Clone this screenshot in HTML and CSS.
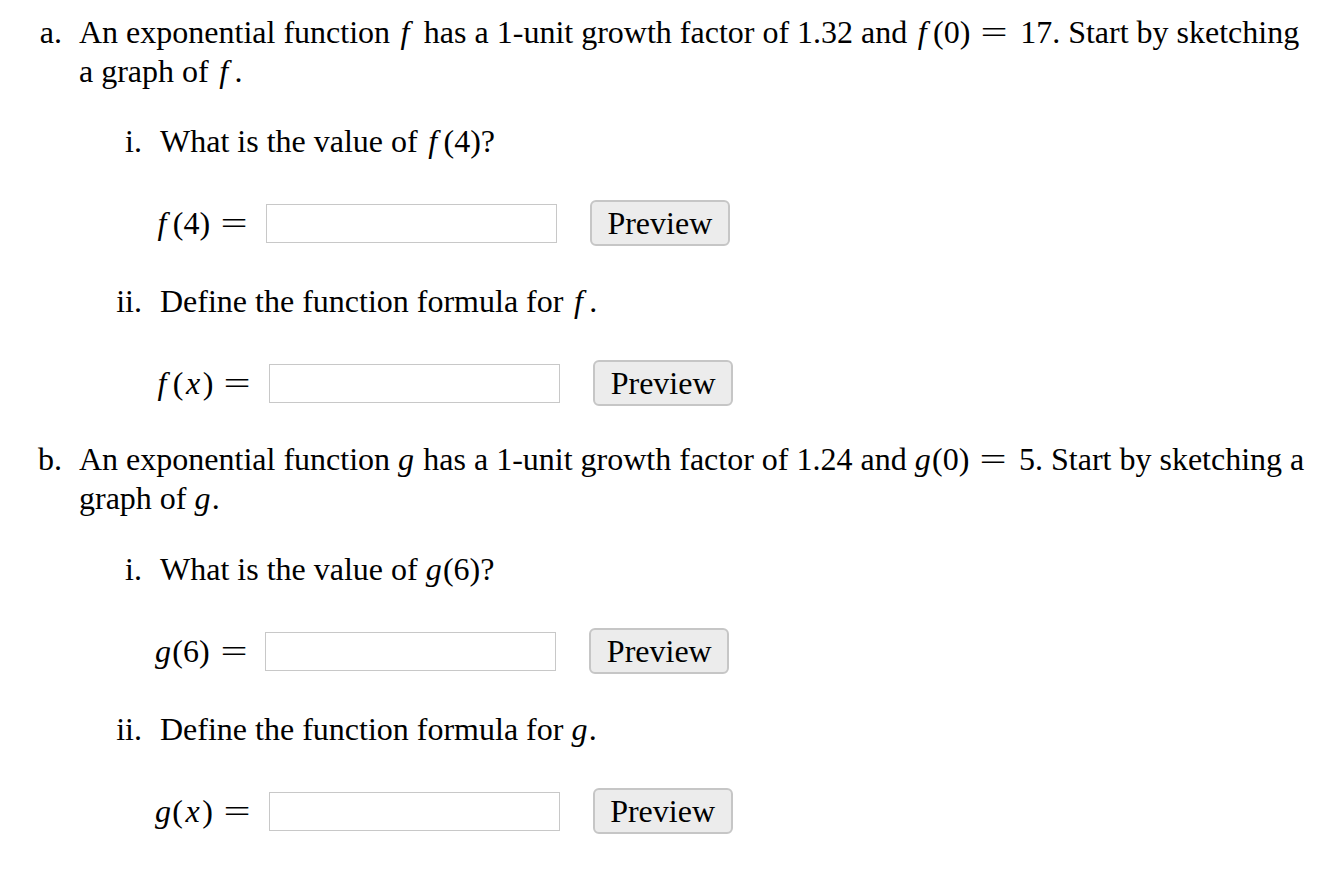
FILE: index.html
```html
<!DOCTYPE html>
<html>
<head>
<meta charset="utf-8">
<link rel="stylesheet" href="styles.css">
</head>
<body>
<div class="problem">
  <div class="part">
    <span class="mark">a.</span>
    <div class="body">
      <p class="text">An exponential function <span class="math"><i class="mv fv">f</i></span> has a 1-unit growth factor of 1.32 and <span class="math"><i class="mv fv">f</i>(0)<span class="eq">=</span>17</span>. Start by sketching a graph of <span class="math"><i class="mv fv">f</i></span>.</p>
      <div class="sub">
        <span class="mark">i.</span>
        <p class="text">What is the value of <span class="math"><i class="mv fv">f</i>(4)</span>?</p>
        <div class="row">
          <span class="math label"><i class="mv fv">f</i>(4)<span class="eq">=</span></span>
          <input class="answer" type="text">
          <button class="preview" type="button">Preview</button>
        </div>
      </div>
      <div class="sub">
        <span class="mark">ii.</span>
        <p class="text">Define the function formula for <span class="math"><i class="mv fv">f</i></span>.</p>
        <div class="row">
          <span class="math label"><i class="mv fv">f</i>(<i class="mv xv">x</i>)<span class="eq">=</span></span>
          <input class="answer" type="text">
          <button class="preview" type="button">Preview</button>
        </div>
      </div>
    </div>
  </div>
  <div class="part">
    <span class="mark">b.</span>
    <div class="body">
      <p class="text">An exponential function <span class="math"><i class="mv gv">g</i></span> has a 1-unit growth factor of 1.24 and <span class="math"><i class="mv gv">g</i>(0)<span class="eq">=</span>5</span>. Start by sketching a graph of <span class="math"><i class="mv gv">g</i></span>.</p>
      <div class="sub">
        <span class="mark">i.</span>
        <p class="text">What is the value of <span class="math"><i class="mv gv">g</i>(6)</span>?</p>
        <div class="row">
          <span class="math label"><i class="mv gv">g</i>(6)<span class="eq">=</span></span>
          <input class="answer" type="text">
          <button class="preview" type="button">Preview</button>
        </div>
      </div>
      <div class="sub">
        <span class="mark">ii.</span>
        <p class="text">Define the function formula for <span class="math"><i class="mv gv">g</i></span>.</p>
        <div class="row">
          <span class="math label"><i class="mv gv">g</i>(<i class="mv xv">x</i>)<span class="eq">=</span></span>
          <input class="answer" type="text">
          <button class="preview" type="button">Preview</button>
        </div>
      </div>
    </div>
  </div>
</div>
</body>
</html>
```

FILE: styles.css
```css
html, body {
  margin: 0;
  padding: 0;
  background: #ffffff;
}
body {
  font-family: "Liberation Serif", "Times New Roman", serif;
  font-size: 32px;
  line-height: 39px;
  color: #000000;
}
.problem {
  padding: 13px 14px 0 0;
}
.part {
  display: grid;
  grid-template-columns: 62px 1fr;
  column-gap: 17px;
}
.part + .part {
  margin-top: 34px;
}
.mark {
  text-align: right;
  white-space: nowrap;
}
.text {
  margin: 0;
}
.sub {
  display: grid;
  grid-template-columns: 63px 1fr;
  column-gap: 18px;
  margin-top: 31px;
}
.part + .part .text + .sub {
  margin-top: 32px;
}
.sub + .sub {
  margin-top: 36px;
}
.row {
  grid-column: 1 / -1;
  display: flex;
  align-items: center;
  padding-left: 76px;
  margin-top: 39px;
  height: 46px;
}
.math {
  white-space: nowrap;
  line-height: 1;
}
.mv {
  font-style: italic;
}
.fv {
  margin-left: 0.08em;
  margin-right: 0.2em;
}
.gv {
  margin-right: 0.04em;
}
.xv {
  margin: 0 0.08em;
}
.eq {
  display: inline-block;
  transform: scaleX(1.5);
  margin: 0 0.52em 0 0.47em;
}
.label {
  margin-right: 6px;
}
.answer {
  width: 291px;
  height: 39px;
  box-sizing: border-box;
  border: 1px solid #c8c8c8;
  background: #ffffff;
  margin: 0;
  padding: 0 4px;
  font: inherit;
}
.preview {
  margin-left: 33px;
  width: 140px;
  height: 46px;
  box-sizing: border-box;
  border: 2px solid #c6c6c6;
  border-radius: 6px;
  background: #ececec;
  font-family: "Liberation Serif", "Times New Roman", serif;
  font-size: 32px;
  color: #000000;
  padding: 0;
}
```
